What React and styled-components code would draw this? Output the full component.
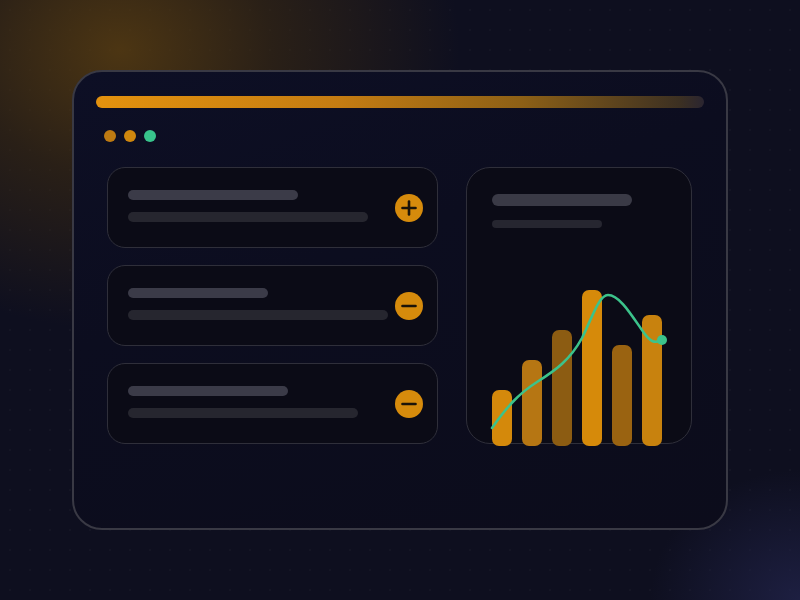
import React from "react";
import styled, { createGlobalStyle } from "styled-components";

const GlobalStyle = createGlobalStyle`
    html, body {
        margin: 0;
        padding: 0;
        background: #0e0f1f;
        font-family: "Inter", "Liberation Sans", sans-serif;
    }
`;

const rows = [
    { top: 170, bottom: 240, sign: "plus" },
    { top: 140, bottom: 260, sign: "minus" },
    { top: 160, bottom: 230, sign: "minus" },
];

const bars = [
    { h: 56, color: "#d4890b" },
    { h: 86, color: "#b67613" },
    { h: 116, color: "#8c5c12" },
    { h: 156, color: "#d68a0a" },
    { h: 101, color: "#9a6311" },
    { h: 131, color: "#c8820e" },
];

const SignIcon = ({ sign }) => (
    <svg width="28" height="28" viewBox="0 0 28 28">
        <circle cx="14" cy="14" r="14" fill="#d68b0c" />
        <line x1="7.5" y1="14" x2="20.5" y2="14" stroke="#1b1409" strokeWidth="2.6" strokeLinecap="round" />
        {sign === "plus" && (
            <line x1="14" y1="7.5" x2="14" y2="20.5" stroke="#1b1409" strokeWidth="2.6" strokeLinecap="round" />
        )}
    </svg>
);

const App = () => {
    return (
        <>
            <GlobalStyle />
            <Page>
                <Window>
                    <TopBar />
                    <Dots>
                        <Dot color="#bd7a12" />
                        <Dot color="#cf870e" />
                        <Dot color="#38c48c" />
                    </Dots>
                    <Body>
                        <List>
                            {rows.map((row, i) => (
                                <RowCard key={i}>
                                    <Lines>
                                        <Line width={row.top} light />
                                        <Line width={row.bottom} />
                                    </Lines>
                                    <SignIcon sign={row.sign} />
                                </RowCard>
                            ))}
                        </List>
                        <ChartCard>
                            <ChartTitle />
                            <ChartSub />
                            <Chart>
                                {bars.map((bar, i) => (
                                    <Bar key={i} color={bar.color} style={{ height: bar.h }} />
                                ))}
                                <Curve width="180" height="160" viewBox="0 0 180 160">
                                    <path
                                        d="M0 142 C 14 122, 26 108, 45 96 C 64 84, 78 74, 90 52 C 100 32, 107 9, 116 9 C 128 9, 140 30, 152 47 C 158 55, 162 58, 170 54"
                                        fill="none"
                                        stroke="#3cc38b"
                                        strokeWidth="2.6"
                                        strokeLinecap="round"
                                    />
                                    <circle cx="170" cy="54" r="5" fill="#3cc38b" />
                                </Curve>
                            </Chart>
                        </ChartCard>
                    </Body>
                </Window>
            </Page>
        </>
    );
};

const Page = styled.div`
    width: 800px;
    height: 600px;
    display: flex;
    align-items: center;
    justify-content: center;
    overflow: hidden;
    background:
        radial-gradient(ellipse 340px 280px at 120px 50px, rgba(100, 68, 14, 0.72) 0%, rgba(72, 50, 14, 0.48) 45%, rgba(30, 24, 20, 0) 100%),
        radial-gradient(ellipse 150px 130px at 800px 600px, rgba(36, 38, 80, 0.7), rgba(20, 22, 50, 0) 100%),
        radial-gradient(rgba(255, 255, 255, 0.025) 1px, transparent 1px) 0 0 / 20px 20px,
        #0e0f1f;
`;

const Window = styled.div`
    box-sizing: border-box;
    width: 656px;
    height: 460px;
    padding: 24px 22px;
    border: 2px solid #393944;
    border-radius: 30px;
    background: linear-gradient(160deg, #0d0f25 0%, #0c0d1f 40%, #0c0c1b 100%);
`;

const TopBar = styled.div`
    height: 12px;
    border-radius: 6px;
    background: linear-gradient(90deg, #e4920e 0%, #c47c12 40%, #8d6016 70%, #3c3022 96%, #2a2530 100%);
`;

const Dots = styled.div`
    display: flex;
    gap: 8px;
    margin: 22px 0 0 8px;
`;

const Dot = styled.span`
    width: 12px;
    height: 12px;
    border-radius: 50%;
    background: ${({ color }) => color};
`;

const Body = styled.div`
    display: grid;
    grid-template-columns: 331px 226px;
    gap: 28px;
    margin-top: 25px;
    padding: 0 12px 0 11px;
    align-items: start;
`;

const List = styled.div`
    display: flex;
    flex-direction: column;
    gap: 17px;
`;

const RowCard = styled.div`
    box-sizing: border-box;
    height: 81px;
    display: flex;
    align-items: center;
    padding: 0 14px 0 20px;
    border: 1.5px solid #2f2f3a;
    border-radius: 18px;
    background: #0b0b16;
`;

const Lines = styled.div`
    flex: 1;
    display: flex;
    flex-direction: column;
    gap: 12px;
    margin-bottom: 4px;
`;

const Line = styled.div`
    width: ${({ width }) => width}px;
    height: 10px;
    border-radius: 5px;
    background: ${({ light }) => (light ? "#3b3b48" : "#26262f")};
`;

const ChartCard = styled.div`
    box-sizing: border-box;
    height: 277px;
    display: flex;
    flex-direction: column;
    padding: 26px 24px 0 25px;
    border: 1.5px solid #2f2f3a;
    border-radius: 24px;
    background: #0b0b16;
`;

const ChartTitle = styled.div`
    width: 140px;
    height: 12px;
    border-radius: 6px;
    background: #3a3a46;
`;

const ChartSub = styled.div`
    width: 110px;
    height: 8px;
    margin-top: 14px;
    border-radius: 4px;
    background: #262630;
`;

const Chart = styled.div`
    position: relative;
    flex: 1;
    display: flex;
    align-items: flex-end;
    gap: 10px;
    margin-bottom: -3px;
`;

const Bar = styled.div`
    width: 20px;
    border-radius: 7px;
    background: ${({ color }) => color};
`;

const Curve = styled.svg`
    position: absolute;
    left: 0;
    bottom: 0;
    overflow: visible;
`;

export default App;
